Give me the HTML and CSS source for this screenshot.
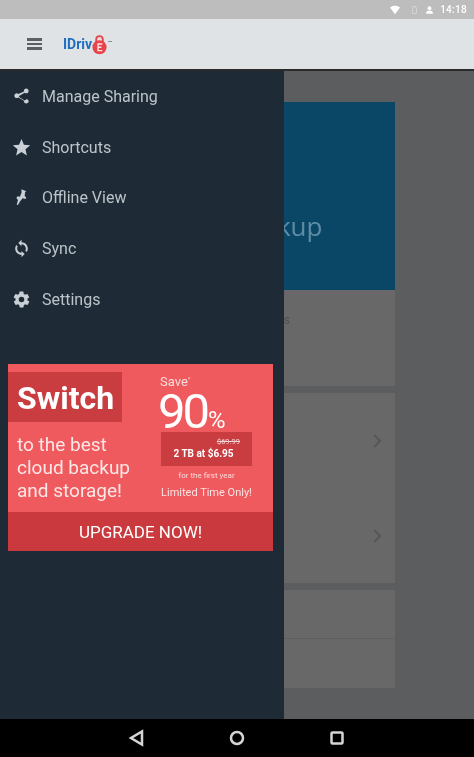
FILE: index.html
```html
<!DOCTYPE html>
<html lang="en">
<head>
    <meta charset="UTF-8">
    <title>IDrive</title>
    <link rel="stylesheet" href="styles.css">
</head>
<body>
    <div class="screen">
        <div class="status-bar">
            <svg class="st-wifi" viewBox="0 0 24 24"><path d="M12 22 0 6c3.300-2.500 7.500-4 12-4s8.700 1.500 12 4z"/></svg>
            <svg class="st-sim" viewBox="0 0 24 24"><path d="M6 2h8l4 4v16H6zM8 4v16h8V7l-3-3z"/></svg>
            <svg class="st-user" viewBox="0 0 24 24"><circle cx="12" cy="7" r="5"/><path d="M3 22v-3c0-4 5-6 9-6s9 2 9 6v3z"/></svg>
            <span class="st-time">14:18</span>
        </div>

        <div class="app-bar">
            <div class="burger"><i></i><i></i><i></i></div>
            <div class="logo">
                <span>IDriv</span>
                <svg viewBox="0 0 16 22"><path d="M4.500 9V5.500a3.500 3.500 0 0 1 7 0V9" fill="none" stroke="#e8434a" stroke-width="2"/><circle cx="8" cy="14" r="7.500" fill="#e8434a"/><path d="M11 10.500H6.500v7H11M6.500 14H10" fill="none" stroke="#f9e3e3" stroke-width="1.500"/></svg>
                <em></em>
            </div>
        </div>

        <div class="body-area">
            <!-- page behind the drawer -->
            <div class="page">
                <div class="hero"><span>Online Backup</span></div>
                <div class="card card-a"><span>Files</span></div>
                <div class="card card-b">
                    <div class="arrow-row"><svg viewBox="0 0 10 16"><path d="M2 2l6 6-6 6"/></svg></div>
                    <div class="arrow-row"><svg viewBox="0 0 10 16"><path d="M2 2l6 6-6 6"/></svg></div>
                </div>
                <div class="card card-c"><div></div><div></div></div>
            </div>

            <div class="drawer">
                <ul class="menu">
                    <li>
                        <svg viewBox="0 0 24 24"><path d="M18 16.100c-.8 0-1.500.3-2 .8l-7.100-4.200c.1-.2.100-.5.100-.7s0-.5-.1-.7L16 7.200c.5.5 1.200.8 2 .8 1.700 0 3-1.300 3-3s-1.300-3-3-3-3 1.300-3 3c0 .2 0 .5.100.7L8 8.800C7.500 8.300 6.800 8 6 8c-1.700 0-3 1.300-3 3s1.300 3 3 3c.8 0 1.500-.3 2-.8l7.100 4.200c-.1.200-.1.400-.1.600 0 1.600 1.300 2.900 3 2.900s3-1.300 3-2.900-1.300-2.900-3-2.900z"/></svg>
                        <span>Manage Sharing</span>
                    </li>
                    <li>
                        <svg viewBox="0 0 24 24"><path d="M12 17.800 18.800 22l-1.800-7.700L23 9.100l-7.900-.7L12 1.200 8.900 8.400 1 9.100l6 5.200L5.200 22z"/></svg>
                        <span>Shortcuts</span>
                    </li>
                    <li>
                        <svg viewBox="0 0 24 24"><path d="M12 1.500l6 2.500-1.500 1.500-.5 4.500 2 2-1 2-3.500-1-3 3.500-3 5-1.500-.5 1.500-6-2-2.500 1.500-2 3 .5 2-5z"/></svg>
                        <span>Offline View</span>
                    </li>
                    <li>
                        <svg viewBox="0 0 24 24"><path d="M12 4V1L8 5l4 4V6.500c3 0 5.500 2.500 5.500 5.500 0 1-.2 1.900-.7 2.700l1.800 1.800c.9-1.300 1.400-2.800 1.400-4.500 0-4.400-3.600-8-8-8zm0 13.500c-3 0-5.500-2.500-5.500-5.500 0-1 .2-1.900.7-2.700L5.400 7.500C4.500 8.800 4 10.300 4 12c0 4.400 3.600 8 8 8v3l4-4-4-4z"/></svg>
                        <span>Sync</span>
                    </li>
                    <li>
                        <svg viewBox="0 0 24 24"><path d="M19.400 13c0-.3.100-.6.100-1s0-.7-.1-1l2.100-1.600c.2-.2.200-.4.100-.6l-2-3.500c-.1-.2-.4-.3-.6-.2l-2.500 1c-.5-.4-1.100-.7-1.700-1l-.4-2.700c0-.2-.2-.4-.5-.4h-4c-.2 0-.4.200-.5.400l-.4 2.700c-.6.300-1.200.6-1.700 1l-2.500-1c-.2-.1-.5 0-.6.200l-2 3.500c-.1.200-.1.400.1.600L4.600 11c0 .3-.1.600-.1 1s0 .7.1 1l-2.100 1.600c-.2.200-.2.400-.1.600l2 3.500c.1.200.4.300.6.200l2.500-1c.5.400 1.100.7 1.700 1l.4 2.700c0 .2.200.4.500.4h4c.3 0 .5-.2.500-.4l.4-2.700c.6-.3 1.200-.6 1.700-1l2.500 1c.2.100.5 0 .6-.2l2-3.500c.1-.2.100-.4-.1-.6zM12 15.500a3.500 3.500 0 1 1 0-7 3.500 3.500 0 0 1 0 7z"/></svg>
                        <span>Settings</span>
                    </li>
                </ul>

                <div class="promo">
                    <div class="promo-main">
                        <div class="promo-left">
                            <div class="switch">Switch</div>
                            <p>to the best<br>cloud backup<br>and storage!</p>
                        </div>
                        <div class="promo-right">
                            <div class="save">Save<sup>*</sup></div>
                            <div class="percent">90<small>%</small></div>
                            <div class="price">
                                <s>$69.99</s>
                                <b>2 TB at $6.95</b>
                            </div>
                            <div class="first-year">for the first year</div>
                            <div class="limited">Limited Time Only!</div>
                        </div>
                    </div>
                    <div class="upgrade">UPGRADE NOW!</div>
                </div>
            </div>
        </div>

        <div class="nav-bar">
            <svg viewBox="0 0 18 18"><path d="M14 2.500v13L3 9z"/></svg>
            <svg viewBox="0 0 18 18"><circle cx="9" cy="9" r="6"/></svg>
            <svg viewBox="0 0 18 18"><rect x="3.500" y="3.500" width="11" height="11" rx="1"/></svg>
        </div>
    </div>
</body>
</html>
```

FILE: styles.css
```css
html, body {
    margin: 0; padding: 0;
    background: #000;
}
.screen {
    display: flex;
    flex-direction: column;
    width: 474px; height: 757px;
    overflow: hidden;
    font-family: Roboto, "Liberation Sans", sans-serif;
}

/* the source shot is soft, so text and icons get a slight blur */
.status-bar svg,
.st-time,
.burger,
.logo,
.hero span,
.card-a span,
.arrow-row svg,
.menu li,
.promo,
.nav-bar svg {
    filter: blur(0.7px);
}

/* status bar */
.status-bar {
    display: flex;
    align-items: center;
    justify-content: flex-end;
    height: 19px;
    padding-right: 7px;
    background: #bdbdbd;
    flex-shrink: 0;
}
    .status-bar svg {
        fill: #fff;
    }
    .st-wifi { width: 14px; height: 10px; margin-right: 8px; }
    .st-sim { width: 9px; height: 10px; margin-right: 6px; opacity: .45; }
    .st-user { width: 9px; height: 10px; margin-right: 6px; }
    .st-time {
        color: #fff;
        font-size: 10px;
        font-weight: 500;
        letter-spacing: .3px;
    }

/* top bar */
.app-bar {
    display: flex;
    align-items: center;
    height: 52px;
    padding-left: 27px;
    background: #dfe3e6;
    border-bottom: 2px solid #2a2a2a;
    box-sizing: border-box;
    flex-shrink: 0;
}
    .burger {
        display: flex;
        flex-direction: column;
        gap: 2px;
        width: 15px;
        margin-right: 21px;
    }
        .burger i {
            display: block;
            height: 2.500px;
            background: #5c6064;
        }
    .logo {
        display: flex;
        align-items: center;
        color: #1f6fc0;
        font-size: 14px;
        font-weight: 700;
    }
        .logo svg {
            width: 15px; height: 21px;
        }
        .logo em {
            width: 4px; height: 1px;
            margin: 0 0 6px 1px;
            background: #8a8f94;
        }

/* middle part */
.body-area {
    position: relative;
    flex: 1;
    background: #5c5d5f;
}

.page {
    display: flex;
    flex-direction: column;
    width: 316px;
    margin-left: 79px;
    padding-top: 31px;
}
    .hero {
        display: flex;
        align-items: center;
        justify-content: center;
        height: 188px;
        padding: 59px 5px 0 0;
        box-sizing: border-box;
        background: #0a4766;
        color: #5f8ca5;
        font: 26px "Open Sans", sans-serif;
    }
    .card {
        background: #686868;
    }
    .card-a {
        height: 96px;
        margin-bottom: 7px;
        padding: 23px 105px 0 0;
        box-sizing: border-box;
        color: #525252;
        font-size: 12px;
        text-align: right;
    }
    .card-b {
        height: 190px;
        margin-bottom: 7px;
    }
        .arrow-row {
            display: flex;
            align-items: center;
            justify-content: flex-end;
            height: 95px;
            padding-right: 13px;
            box-sizing: border-box;
        }
            .arrow-row svg {
                width: 10px; height: 16px;
                fill: none;
                stroke: #565656;
                stroke-width: 2;
            }
    .card-c {
        height: 98px;
    }
        .card-c div {
            height: 48px;
        }
        .card-c div:first-child {
            border-bottom: 1px solid #5e5e5e;
        }

/* drawer sits on top of the page */
.drawer {
    position: absolute;
    left: 0; top: 0; bottom: 0;
    width: 284px;
    background: #1e2a35;
}
    .menu {
        margin: 0; padding: 0;
        list-style: none;
    }
        .menu li {
            display: flex;
            align-items: center;
            height: 50.75px;
            padding-left: 12px;
            color: #bcc4ca;
            font-size: 16px;
        }
            .menu svg {
                width: 19px; height: 19px;
                margin-right: 11px;
                fill: #c9d0d5;
            }

    .promo {
        display: flex;
        flex-direction: column;
        width: 265px; height: 187px;
        margin: 39px 0 0 8px;
        background: #ef5a5e;
        color: #fff;
    }
        .promo-main {
            display: flex;
            flex: 1;
        }
        .promo-left {
            width: 152px;
            padding-top: 8px;
        }
            .switch {
                width: 114px; height: 50px;
                padding-left: 9px;
                box-sizing: border-box;
                background: #c93c40;
                font-size: 32px;
                font-weight: 700;
                line-height: 52px;
            }
            .promo-left p {
                margin: 11px 0 0 9px;
                font-size: 19px;
                line-height: 23px;
                color: #fde6e6;
            }
        .promo-right {
            width: 91px;
            margin-left: 1px;
        }
            .save {
                padding-top: 11px;
                margin-left: -1px;
                color: #fbdcdc;
                font-size: 13px;
                line-height: 14px;
            }
                .save sup {
                    font-size: 6px;
                    line-height: 0;
                }
            .percent {
                height: 40px;
                margin: 3px 0 0 -3px;
                font-size: 49px;
                font-weight: 400;
                letter-spacing: -3px;
                line-height: 40px;
                white-space: nowrap;
            }
                .percent small {
                    margin-left: 1px;
                    font-size: 24px;
                    letter-spacing: 0;
                }
            .price {
                display: flex;
                flex-direction: column;
                height: 34px;
                padding: 5px 12px 0 0;
                box-sizing: border-box;
                background: #c93c40;
                text-align: right;
                color: #f6d7d7;
                font-size: 7.500px;
                line-height: 10px;
            }
                .price b {
                    margin: 2px -6px 0 0;
                    color: #fff;
                    font-size: 10px;
                    text-align: center;
                }
            .first-year {
                margin-top: 5px;
                color: #fbd9d9;
                font-size: 8px;
                text-align: center;
            }
            .limited {
                margin-top: 6px;
                color: #fde3e3;
                font-size: 11px;
                text-align: center;
                white-space: nowrap;
            }
        .upgrade {
            height: 39px;
            background: #c9393d;
            font-size: 17px;
            line-height: 40px;
            text-align: center;
        }

/* bottom navigation */
.nav-bar {
    display: flex;
    align-items: center;
    justify-content: center;
    gap: 82px;
    height: 38px;
    background: #000;
    flex-shrink: 0;
}
    .nav-bar svg {
        width: 18px; height: 18px;
        fill: none;
        stroke: #d5d5d5;
        stroke-width: 2.500;
    }
```
